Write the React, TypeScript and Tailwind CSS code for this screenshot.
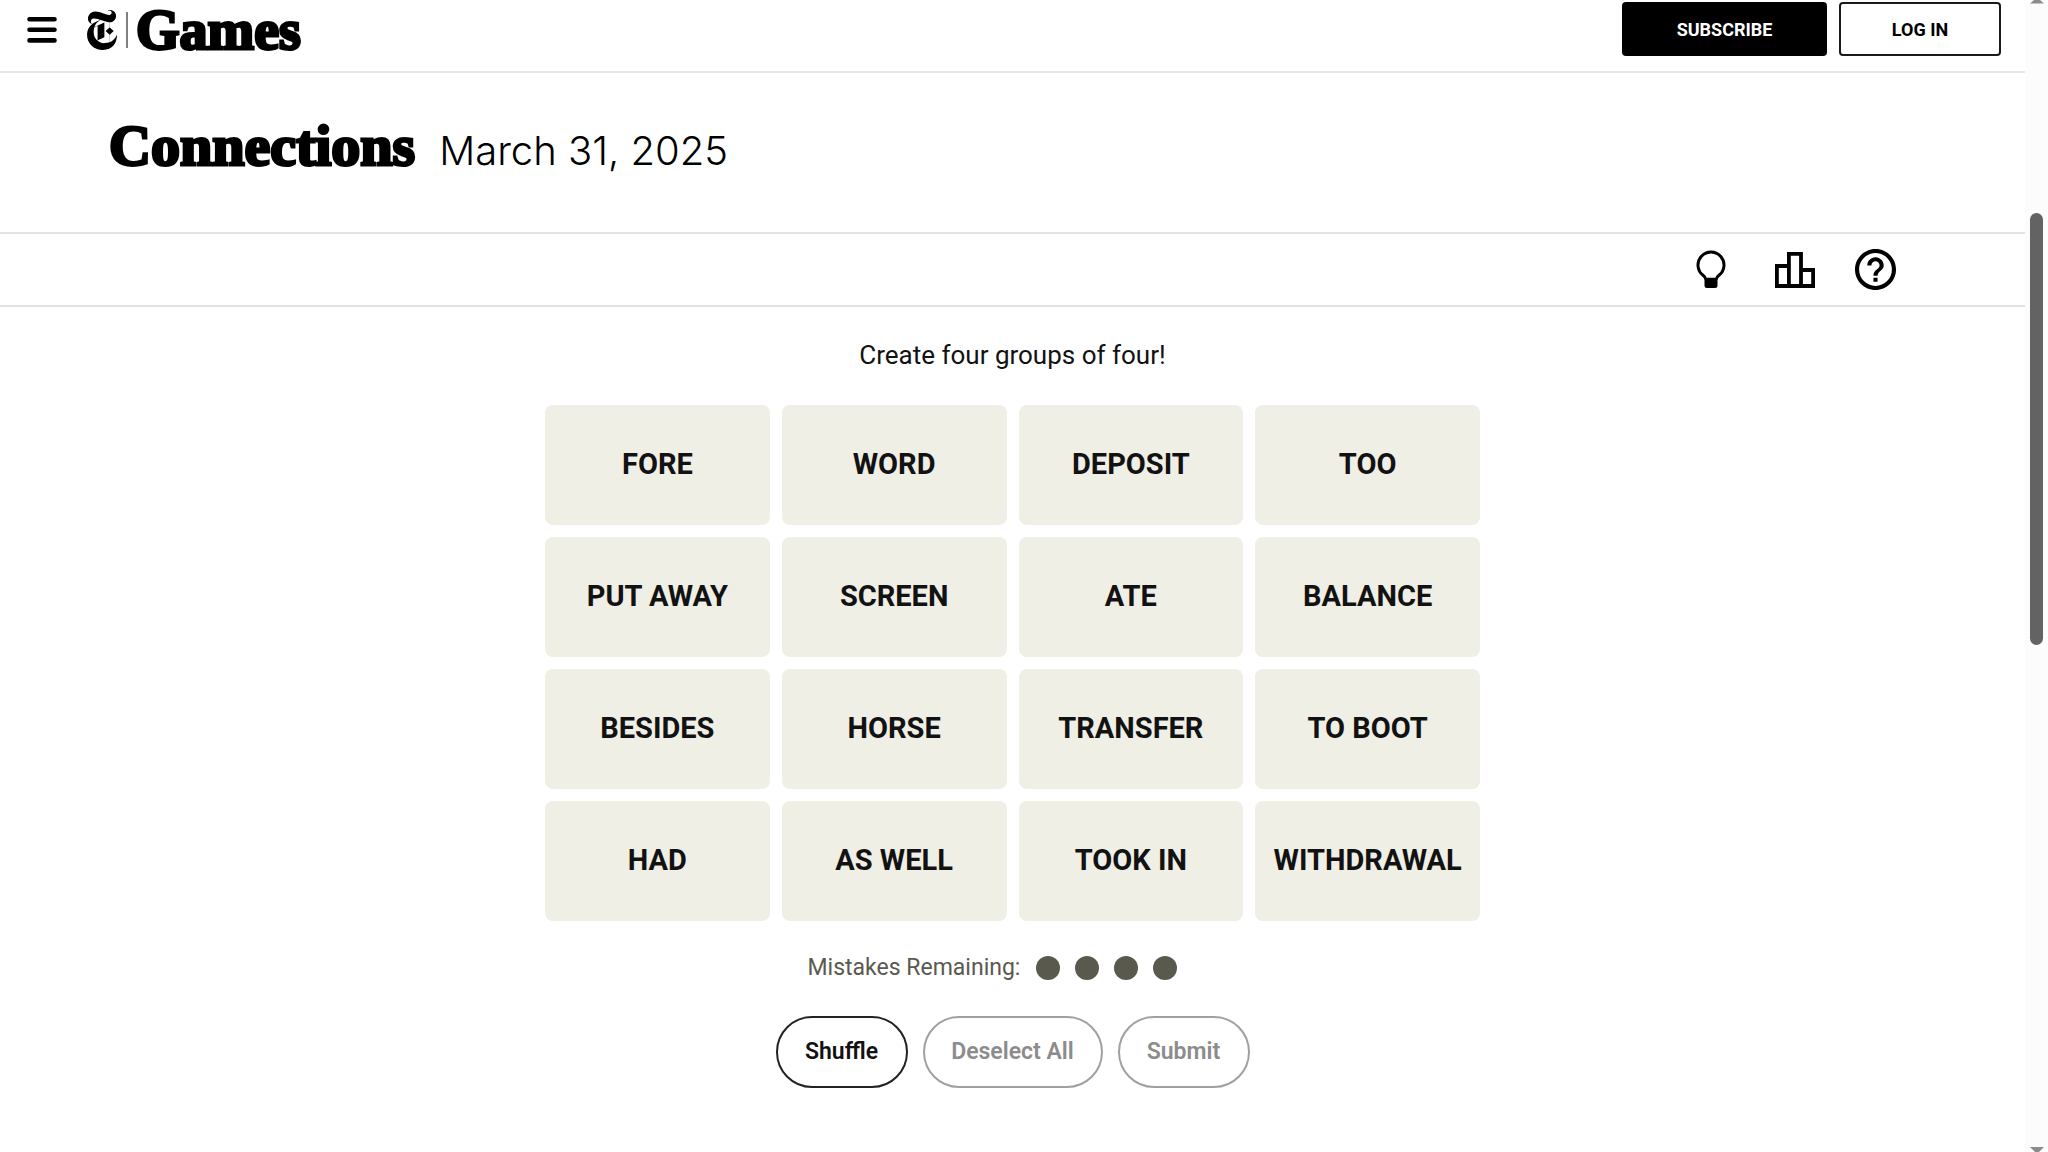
import { useState } from "react";
import { SiNewyorktimes } from "react-icons/si";

const WORDS = [
  "FORE", "WORD", "DEPOSIT", "TOO",
  "PUT AWAY", "SCREEN", "ATE", "BALANCE",
  "BESIDES", "HORSE", "TRANSFER", "TO BOOT",
  "HAD", "AS WELL", "TOOK IN", "WITHDRAWAL",
];

function Header() {
  return (
    <header className="flex h-[73px] items-start justify-between border-b-2 border-[#e8e8e8] pr-6 pl-[27px]">
      <div className="flex items-center pt-2.5">
        <button type="button" aria-label="Open menu" className="mr-[30px]">
          <svg viewBox="0 0 30 28" className="h-7 w-[30px]" stroke="black" strokeWidth="4.6" strokeLinecap="round">
            <path d="M2.5 3.2h25M2.5 13.8h25M2.5 24.4h25" />
          </svg>
        </button>
        <a href="#games" aria-label="Games home" className="flex items-center text-black">
          <SiNewyorktimes viewBox="2.7 0 18.6 24" className="h-10 w-[30px]" preserveAspectRatio="none" />
          <span className="mr-2 ml-[9px] h-9 w-0.5 bg-[#808080]" />
          <span className="font-['Liberation_Serif',serif] text-[56px] leading-10 font-bold [-webkit-text-stroke:3px_black]">
            Games
          </span>
        </a>
      </div>
      <nav className="flex gap-3 pt-0.5 text-[18px] font-bold">
        <button type="button" className="h-[54px] w-[205px] rounded bg-black text-white">SUBSCRIBE</button>
        <button type="button" className="h-[54px] w-[162px] rounded border-2 border-[#1a1a1a]">LOG IN</button>
      </nav>
    </header>
  );
}

function Toolbar() {
  return (
    <div className="flex h-[73px] items-center justify-end gap-10 border-b-2 border-[#e2e2e2] pr-[129px]">
      <button type="button" aria-label="Hints" className="mr-2">
        <svg viewBox="0 0 30 40" className="h-10 w-8">
          <path d="M9.800 29.500Q9.500 27 7 25.200A13 13 0 1 1 23 25.200Q20.500 27 20.200 29.500" fill="none" stroke="black" strokeWidth="3" />
          <path d="M8.500 27.800h13v7.700q0 2.500-2.500 2.500h-8q-2.500 0-2.500-2.500z" />
        </svg>
      </button>
      <button type="button" aria-label="Statistics">
        <svg viewBox="0 0 40 40" className="h-10 w-10" fill="none" stroke="black" strokeWidth="3.800">
          <path d="M13.900 36V3.900H26V36M13.900 16H1.900V36H38.100V20H26" />
        </svg>
      </button>
      <button type="button" aria-label="Help">
        <svg viewBox="2 2 20 20" className="h-[41px] w-[41px]">
          <path d="M11 18h2v-2h-2v2zm1-16C6.480 2 2 6.480 2 12s4.480 10 10 10 10-4.480 10-10S17.520 2 12 2zm0 18c-4.410 0-8-3.590-8-8s3.590-8 8-8 8 3.590 8 8-3.590 8-8 8zm0-14c-2.210 0-4 1.790-4 4h2c0-1.100.9-2 2-2s2 .9 2 2c0 2-3 1.750-3 5h2c0-2.250 3-2.500 3-5 0-2.210-1.790-4-4-4z" />
        </svg>
      </button>
    </div>
  );
}

function Board() {
  const [selected, setSelected] = useState<string[]>([]);
  const toggle = (word: string) =>
    setSelected((s) => (s.includes(word) ? s.filter((w) => w !== word) : s.length < 4 ? [...s, word] : s));
  return (
    <div className="grid w-full max-w-[935px] grid-cols-4 gap-3">
      {WORDS.map((word) => (
        <button
          key={word}
          type="button"
          aria-pressed={selected.includes(word)}
          onClick={() => toggle(word)}
          className={
            selected.includes(word)
              ? "h-[120px] rounded-lg bg-[#5a594e] text-[29px] font-bold text-white"
              : "h-[120px] rounded-lg bg-[#efefe6] text-[29px] font-bold text-[#121212]"
          }
        >
          {word}
        </button>
      ))}
    </div>
  );
}

function Scrollbar() {
  return (
    <div aria-hidden="true" className="flex w-[23px] shrink-0 flex-col items-center bg-[#fcfcfc]">
      <svg viewBox="0 0 14 4" className="h-1 w-3.5" fill="#8c8c8c"><path d="M4 0h6l4 3.500H0z" /></svg>
      <div className="mt-[209px] h-[432px] w-[13px] rounded-full bg-[#636363]" />
      <svg viewBox="0 0 14 5" className="mt-auto h-[5px] w-3.5" fill="#8c8c8c"><path d="M0 0h14l-5 5H5z" /></svg>
    </div>
  );
}

export default function App() {
  return (
    <div className="flex min-h-screen bg-white font-['Roboto','Liberation_Sans',sans-serif] text-black">
      <div className="min-w-0 flex-1">
        <Header />
        <main>
          <div className="flex h-[161px] items-baseline gap-6 border-b-2 border-[#e2e2e2] pt-[37px] pl-[109px]">
            <h1 className="font-['Liberation_Serif',serif] text-[58px] leading-[72px] font-bold [-webkit-text-stroke:3px_black]">
              Connections
            </h1>
            <span className="font-['Inter',sans-serif] text-[40px] leading-[48px] font-light">March 31, 2025</span>
          </div>
          <Toolbar />
          <section className="flex flex-col items-center px-4 pt-8">
            <p className="mb-[34px] text-[26px] leading-8 text-[#121212]">Create four groups of four!</p>
            <Board />
            <div className="mt-[31px] flex items-center pr-10 text-[23px] leading-8 text-[#5a594e]">
              <span className="mr-4">Mistakes Remaining:</span>
              <div className="flex gap-[15px]" role="img" aria-label="4 mistakes remaining">
                {[0, 1, 2, 3].map((n) => (
                  <span key={n} className="size-6 rounded-full bg-[#5a594e]" />
                ))}
              </div>
            </div>
            <div className="mt-8 flex gap-[15px] text-[23px] font-semibold">
              <button type="button" className="h-[72px] w-[132px] rounded-full border-2 border-[#222222] text-[#121212]">Shuffle</button>
              <button type="button" className="h-[72px] w-[180px] rounded-full border-2 border-[#a0a0a0] text-[#8c8c8c]">Deselect All</button>
              <button type="button" className="h-[72px] w-[132px] rounded-full border-2 border-[#a0a0a0] text-[#8c8c8c]">Submit</button>
            </div>
          </section>
        </main>
      </div>
      <Scrollbar />
    </div>
  );
}
